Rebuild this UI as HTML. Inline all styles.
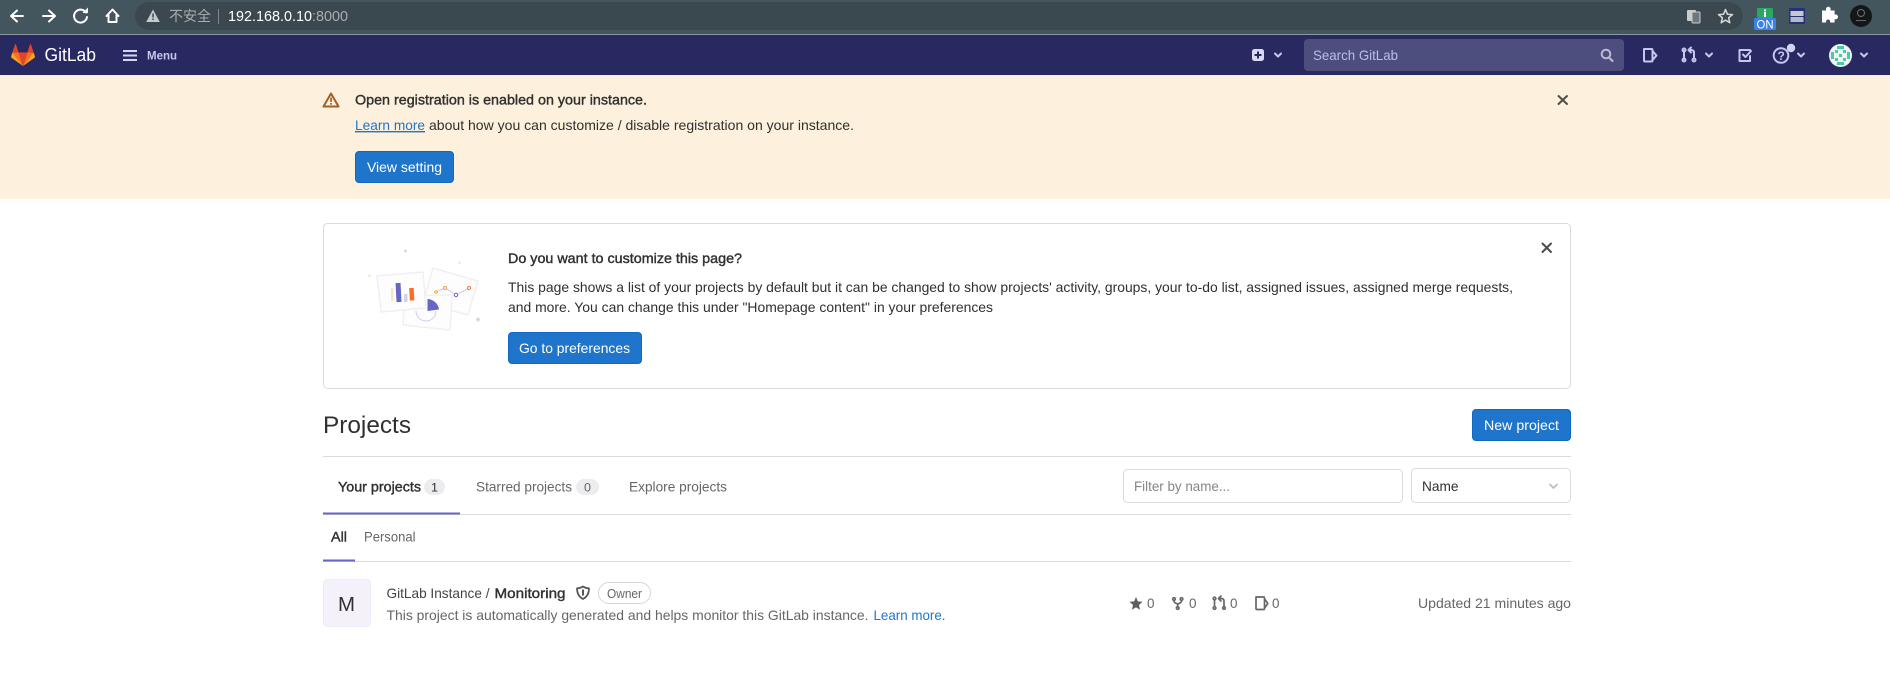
<!DOCTYPE html>
<html lang="en"><head><meta charset="utf-8"><title>Projects · GitLab</title>
<style>
html,body{margin:0;padding:0;background:#fff;width:1890px;height:684px;overflow:hidden}
svg{display:block}
text{font-family:"Liberation Sans","Noto Sans CJK SC",sans-serif;font-size:14px;fill:#303030;white-space:pre}
.m{fill:#666}.b{stroke:#303030;stroke-width:.4}.w{fill:#fff}.l{fill:#1f75cb}
.i{fill:none;stroke:#c7c7ee;stroke-width:2;stroke-linecap:round;stroke-linejoin:round}
.g{fill:none;stroke:#666;stroke-width:1.7;stroke-linecap:round;stroke-linejoin:round}
.c{fill:none;stroke:#fff;stroke-width:2;stroke-linecap:round;stroke-linejoin:round}
</style></head><body>
<svg width="1890" height="684" viewBox="0 0 1890 684" xmlns="http://www.w3.org/2000/svg">
<!-- browser chrome -->
<rect width="1890" height="35" fill="#43565e"/>
<rect y="34" width="1890" height="1" fill="#8b9a9e"/>
<rect x="135" y="2" width="1608" height="28" rx="14" fill="#3b484f"/>
<path class="c" d="M23 16H11.500M17 10.500 11 16l6 5.500"/>
<path class="c" d="M43 16h11.500M49 10.500 55 16l-6 5.500"/>
<path class="c" d="M86 12.500A6.500 6.500 0 1 0 87 17" stroke-width="1.800"/>
<path d="M82.500 13h5.500V7.500z" fill="#fff"/>
<path class="c" d="M106.500 16 112.500 9.500 118.500 16M108.500 15v7h8v-7"/>
<path d="M153 9.500 159.800 22H146.200Z" fill="#c4c9cb"/><rect x="152.300" y="13.500" width="1.500" height="4" fill="#3b484f"/><rect x="152.300" y="18.500" width="1.500" height="1.500" fill="#3b484f"/>
<text x="169" y="21" style="fill:#a6adb0" textLength="42" lengthAdjust="spacingAndGlyphs">不安全</text>
<rect x="218" y="9" width="1" height="15" fill="#7b878c"/>
<text x="228" y="21" class="w" style="font-size:15px" textLength="84" lengthAdjust="spacingAndGlyphs">192.168.0.10</text>
<text x="312" y="21" style="font-size:15px;fill:#a6adb0" textLength="36" lengthAdjust="spacingAndGlyphs">:8000</text>
<rect x="1687" y="10" width="9" height="11" rx="1" fill="#c9cdce"/><rect x="1692" y="12" width="8" height="11" rx="1" fill="#6c787d" stroke="#c9cdce"/>
<path d="M1725.500 9.500 1727.400 14.200 1732.500 14.600 1728.600 17.800 1729.800 22.800 1725.500 20.100 1721.200 22.800 1722.400 17.800 1718.500 14.600 1723.600 14.200Z" fill="none" stroke="#d5d9da" stroke-width="1.500" stroke-linejoin="round"/>
<rect x="1757" y="8" width="16" height="10" rx="1.500" fill="#2aa760"/><rect x="1764" y="9.500" width="2" height="1.800" fill="#fff"/><rect x="1764" y="12" width="2" height="5" fill="#fff"/>
<rect x="1754" y="18" width="22" height="12" rx="1.500" fill="#3b82e6"/>
<text x="1756.500" y="28.500" class="w" style="font-size:12px" textLength="17" lengthAdjust="spacingAndGlyphs">ON</text>
<rect x="1789" y="8" width="16" height="16" rx="1" fill="#2a2f7c"/><rect x="1790.500" y="11" width="13" height="5" fill="#c4c9d0"/><rect x="1790.500" y="17" width="13" height="5" fill="#b4bac2"/>
<path d="M1822 13h4v-1.500a2.300 2.300 0 0 1 4.600 0V13h4v4h1a2.400 2.400 0 0 1 0 4.800h-1V25h-4.500v-1a2 2 0 0 0-4 0v1H1822Z" transform="translate(0 -2.500)" fill="#fff"/>
<circle cx="1861" cy="16" r="11" fill="#14171a"/><circle cx="1861" cy="13" r="3.500" fill="none" stroke="#6d7174"/><rect x="1856" y="20" width="10" height="1" fill="#666"/>
<!-- gitlab navbar -->
<rect y="35" width="1890" height="40" fill="#292961"/>
<g transform="translate(11 44)">
<path d="M12 22 16.400 8.400H7.600Z" fill="#e24329"/><path d="M12 22 7.600 8.400H1.400Z" fill="#fc6d26"/><path d="M12 22 16.400 8.400H22.600Z" fill="#fc6d26"/>
<path d="M1.400 8.400 .1 12.500c-.1.500 0 1 .4 1.300L12 22Z" fill="#fca326"/><path d="M22.600 8.400 23.900 12.500c.1.500 0 1-.4 1.300L12 22Z" fill="#fca326"/>
<path d="M1.400 8.400H7.600L4.900.3c-.1-.4-.6-.4-.8 0Z" fill="#e24329"/><path d="M22.600 8.400H16.400L19.100.3c.1-.4.6-.4.8 0Z" fill="#e24329"/>
</g>
<text x="44.500" y="61" style="font-size:18px;fill:#fff" textLength="51.500" lengthAdjust="spacingAndGlyphs">GitLab</text>
<path d="M123 51h14M123 55.500h14M123 60h14" stroke="#d5d5f2" stroke-width="2" fill="none"/>
<text x="147" y="59.500" style="font-size:12px;font-weight:700;fill:#c7c7ee" textLength="30" lengthAdjust="spacingAndGlyphs">Menu</text>
<rect x="1252" y="49" width="12" height="12" rx="2.500" fill="#d9d9f5"/><path d="M1258 51.500v7M1254.500 55h7" stroke="#292961" stroke-width="2"/>
<path class="i" d="M1275 53.500 1278 56.500 1281 53.500"/>
<rect x="1304" y="39" width="320" height="32" rx="4" fill="#4e4e7e"/>
<text x="1313" y="60" style="fill:#b8bfe6" textLength="85" lengthAdjust="spacingAndGlyphs">Search GitLab</text>
<circle cx="1606" cy="54" r="4.300" fill="none" stroke="#b9b9d2" stroke-width="2"/><path d="M1609 57.500 1612.500 61" stroke="#b9b9d2" stroke-width="2.200" stroke-linecap="round"/>
<path class="i" d="M1644 49h7.500c.7 0 1 .5 1 1v10.500c0 .5-.3 1-1 1H1645c-.7 0-1-.5-1-1Z"/><path class="i" d="M1653 51.500 1656.500 55.500 1653 59.500"/>
<circle cx="1684" cy="50" r="1.500" class="i"/><circle cx="1684" cy="60" r="1.500" class="i"/><circle cx="1694" cy="60" r="1.500" class="i"/>
<path class="i" d="M1684 51v8M1694 58.500v-6c0-1.500-1-2.500-3-2.500h-2M1691 47.500 1688.500 50l2.500 2.500"/>
<path class="i" d="M1706 53.500 1709 56.500 1712 53.500"/>
<path class="i" d="M1750 50h-10.500v11h10.500v-5M1743 54.500l2.500 2.500 5.500-6"/>
<circle cx="1781" cy="55.500" r="7.300" class="i"/><text x="1777.500" y="60" style="font-size:12px;font-weight:700;fill:#c7c7ee">?</text>
<circle cx="1791" cy="48" r="4.200" fill="#d3d3f5"/>
<path class="i" d="M1798 53.500 1801 56.500 1804 53.500"/>
<circle cx="1840.500" cy="55.500" r="11.500" fill="#f4f0f4"/>
<g fill="#3fd0a5"><rect x="1837" y="46" width="7" height="3"/><rect x="1837" y="62" width="7" height="3"/><rect x="1831" y="52" width="3" height="7"/><rect x="1847" y="52" width="3" height="7"/><rect x="1835" y="50" width="3" height="3"/><rect x="1843" y="50" width="3" height="3"/><rect x="1835" y="58" width="3" height="3"/><rect x="1843" y="58" width="3" height="3"/><rect x="1839" y="54" width="3" height="3"/></g>
<path class="i" d="M1861 53.500 1864 56.500 1867 53.500"/>
<!-- banner -->
<rect y="75" width="1890" height="124" fill="#fdf1dd"/>
<path d="M331 93.500 338.500 106.500H323.500Z" fill="none" stroke="#a75c24" stroke-width="2" stroke-linejoin="round"/><rect x="330.200" y="97.500" width="1.700" height="4.500" fill="#a75c24"/><rect x="330.200" y="103" width="1.700" height="1.700" fill="#a75c24"/>
<text x="355" y="104.500" class="b" textLength="292" lengthAdjust="spacingAndGlyphs">Open registration is enabled on your instance.</text>
<text x="355" y="130" class="l" textLength="70" lengthAdjust="spacingAndGlyphs" text-decoration="underline">Learn more</text>
<text x="429" y="130" textLength="425" lengthAdjust="spacingAndGlyphs">about how you can customize / disable registration on your instance.</text>
<rect x="355.500" y="151.500" width="98" height="31" rx="3.500" fill="#1f75cb" stroke="#1068bf"/>
<text x="367" y="172" class="w" textLength="75" lengthAdjust="spacingAndGlyphs">View setting</text>
<path d="M1558.500 96 1567 104M1567 96 1558.500 104" stroke="#4c4c4c" stroke-width="2" stroke-linecap="round"/>
<!-- customize card -->
<rect x="323.500" y="223.500" width="1247" height="165" rx="4" fill="#fff" stroke="#dbdbdb"/>
<g fill="#fdfdfe" stroke="#f0f0f3" stroke-width="1.500" stroke-linejoin="round">
<path d="M433 268 478 281 468 315 423 303Z"/>
<path d="M405 296 452 295 450 330 403 325Z"/>
</g>
<path d="M416 311A10 10 0 0 0 436 311" fill="none" stroke="#cfcbee" stroke-width="1"/>
<path d="M377 276 423 272 426 308 381 312Z" fill="#fdfdfe" stroke="#f0f0f3" stroke-width="1.500" stroke-linejoin="round"/>
<rect x="396" y="283" width="5" height="19" fill="#6666c4" transform="rotate(-3 398 292)"/>
<rect x="404" y="294" width="3.500" height="8" fill="#d1d1f0"/>
<rect x="409.500" y="288" width="4.500" height="12.500" fill="#fc6d26" transform="rotate(-3 412 294)"/>
<rect x="391" y="288" width="2.500" height="13" fill="#fbe5c8"/>
<path d="M436 292 445 288 456 295 469 288" fill="none" stroke="#cfcbee" stroke-width="1"/>
<circle cx="436" cy="292" r="1.300" fill="#fff" stroke="#fca326"/><circle cx="445" cy="288" r="1.500" fill="#fff" stroke="#fc9a3c"/><circle cx="456" cy="295" r="1.700" fill="#fff" stroke="#6666c4"/><circle cx="469" cy="288" r="1.500" fill="#fff" stroke="#fc7a30"/>
<path d="M427.500 299v12l11.500-1.500A12 12 0 0 0 427.500 299Z" fill="#6666c4"/>
<path d="M404 251h3M405.500 249.500v3" stroke="#d3d3f0" stroke-width="1.500"/>
<path d="M458 263h3M459.500 261.500v3" stroke="#fbe9d2" stroke-width="1.500"/>
<path d="M368 275.500h3M369.500 274v3" stroke="#fbe9d2" stroke-width="1.500"/>
<path d="M476 319.500h4M478 317.500v4" stroke="#d3d3f0" stroke-width="1.800"/>
<text x="508" y="263" class="b" textLength="234" lengthAdjust="spacingAndGlyphs">Do you want to customize this page?</text>
<text x="508" y="292" textLength="1005" lengthAdjust="spacingAndGlyphs">This page shows a list of your projects by default but it can be changed to show projects' activity, groups, your to-do list, assigned issues, assigned merge requests,</text>
<text x="508" y="312" textLength="485" lengthAdjust="spacingAndGlyphs">and more. You can change this under "Homepage content" in your preferences</text>
<rect x="508.500" y="332.500" width="133" height="31" rx="3.500" fill="#1f75cb" stroke="#1068bf"/>
<text x="519" y="353" class="w" textLength="111" lengthAdjust="spacingAndGlyphs">Go to preferences</text>
<path d="M1542.500 243.500 1551 252M1551 243.500 1542.500 252" stroke="#4c4c4c" stroke-width="2" stroke-linecap="round"/>
<!-- projects header -->
<text x="323" y="433" style="font-size:24px" textLength="88" lengthAdjust="spacingAndGlyphs">Projects</text>
<rect x="1472.500" y="409.500" width="98" height="31" rx="3.500" fill="#1f75cb" stroke="#1068bf"/>
<text x="1484" y="430" class="w" textLength="75" lengthAdjust="spacingAndGlyphs">New project</text>
<rect x="323" y="456" width="1248" height="1" fill="#dbdbdb"/>
<!-- tabs -->
<text x="338" y="491.500" class="b" textLength="83" lengthAdjust="spacingAndGlyphs">Your projects</text>
<rect x="424" y="479" width="21" height="16" rx="8" fill="#ececef"/><text x="431" y="491.500" style="font-size:12px" textLength="7" lengthAdjust="spacingAndGlyphs">1</text>
<text x="476" y="491.500" class="m" textLength="96" lengthAdjust="spacingAndGlyphs">Starred projects</text>
<rect x="576" y="479" width="23" height="16" rx="8" fill="#ececef"/><text x="584" y="491.500" class="m" style="font-size:12px" textLength="7" lengthAdjust="spacingAndGlyphs">0</text>
<text x="629" y="491.500" class="m" textLength="98" lengthAdjust="spacingAndGlyphs">Explore projects</text>
<rect x="323" y="514" width="1248" height="1" fill="#dbdbdb"/>
<rect x="323" y="512.500" width="137" height="2" fill="#6666c4"/>
<rect x="1123.500" y="469.500" width="279" height="33" rx="4" fill="#fff" stroke="#dbdbdb"/>
<text x="1134" y="491" style="fill:#868686" textLength="96" lengthAdjust="spacingAndGlyphs">Filter by name...</text>
<rect x="1411.500" y="468.500" width="159" height="34" rx="4" fill="#fff" stroke="#dbdbdb"/>
<text x="1422" y="491" textLength="36.500" lengthAdjust="spacingAndGlyphs">Name</text>
<path d="M1550 484.500 1553.500 488 1557 484.500" fill="none" stroke="#bfbfbf" stroke-width="1.800" stroke-linecap="round" stroke-linejoin="round"/>
<!-- sub tabs -->
<text x="331" y="541.500" class="b" textLength="16" lengthAdjust="spacingAndGlyphs">All</text>
<text x="364" y="541.500" class="m" textLength="51.500" lengthAdjust="spacingAndGlyphs">Personal</text>
<rect x="323" y="561" width="1248" height="1" fill="#dbdbdb"/>
<rect x="323" y="559.500" width="32" height="2" fill="#6666c4"/>
<!-- project row -->
<rect x="323.500" y="579.500" width="47" height="47" rx="4" fill="#f4f1fa" stroke="#ececf2"/>
<text x="338" y="611" style="font-size:20px;fill:#303030" textLength="17" lengthAdjust="spacingAndGlyphs">M</text>
<text x="386.500" y="598" style="fill:#444" textLength="103" lengthAdjust="spacingAndGlyphs">GitLab Instance /</text>
<text x="494.500" y="598" class="b" textLength="71" lengthAdjust="spacingAndGlyphs">Monitoring</text>
<path d="M583 586.500c2 1.300 4 1.800 6 1.800 0 5-1.500 8.500-6 10.700-4.500-2.200-6-5.700-6-10.700 2 0 4-.5 6-1.800Z" fill="none" stroke="#555" stroke-width="1.700" stroke-linejoin="round"/><path d="M583 589.500v6" stroke="#555" stroke-width="2"/>
<rect x="598.500" y="582.500" width="52" height="21" rx="10.500" fill="#fff" stroke="#d6d6d6"/>
<text x="607" y="598" style="font-size:12.500px;fill:#666" textLength="35" lengthAdjust="spacingAndGlyphs">Owner</text>
<text x="386.500" y="620" class="m" textLength="482" lengthAdjust="spacingAndGlyphs">This project is automatically generated and helps monitor this GitLab instance.</text>
<text x="873.500" y="620" class="l" textLength="72" lengthAdjust="spacingAndGlyphs">Learn more.</text>
<path d="M1136 597 1137.800 601.400 1142.500 601.800 1139 605 1140 609.700 1136 607.200 1132 609.700 1133 605 1129.500 601.800 1134.200 601.400Z" fill="#5f5f5f"/>
<text x="1147" y="608" class="m" textLength="7.500" lengthAdjust="spacingAndGlyphs">0</text>
<circle cx="1174" cy="599" r="1.300" class="g"/><circle cx="1181.500" cy="599" r="1.300" class="g"/><circle cx="1177.700" cy="608" r="1.300" class="g"/>
<path class="g" d="M1174 600.500c0 2.500 1.500 2.500 3.700 3.500v3M1181.500 600.500c0 2.500-1.500 2.500-3.800 3.500"/>
<text x="1189" y="608" class="m" textLength="7.500" lengthAdjust="spacingAndGlyphs">0</text>
<circle cx="1214.500" cy="598.500" r="1.300" class="g"/><circle cx="1214.500" cy="608" r="1.300" class="g"/><circle cx="1224" cy="608" r="1.300" class="g"/>
<path class="g" d="M1214.500 600v6.500M1224 606.500v-5.500c0-1.500-1-2.500-3-2.500h-1.500M1221 596 1218.500 598.500 1221 601"/>
<text x="1230" y="608" class="m" textLength="7.500" lengthAdjust="spacingAndGlyphs">0</text>
<path class="g" d="M1256 597h7.500c.7 0 1 .3 1 1v10.500c0 .7-.3 1-1 1h-6.500c-.7 0-1-.3-1-1Z"/><path class="g" d="M1265 599.500 1267.800 603.500 1265 607.500"/>
<text x="1272" y="608" class="m" textLength="7.500" lengthAdjust="spacingAndGlyphs">0</text>
<text x="1418" y="608" class="m" textLength="153" lengthAdjust="spacingAndGlyphs">Updated 21 minutes ago</text>
</svg>
</body></html>
